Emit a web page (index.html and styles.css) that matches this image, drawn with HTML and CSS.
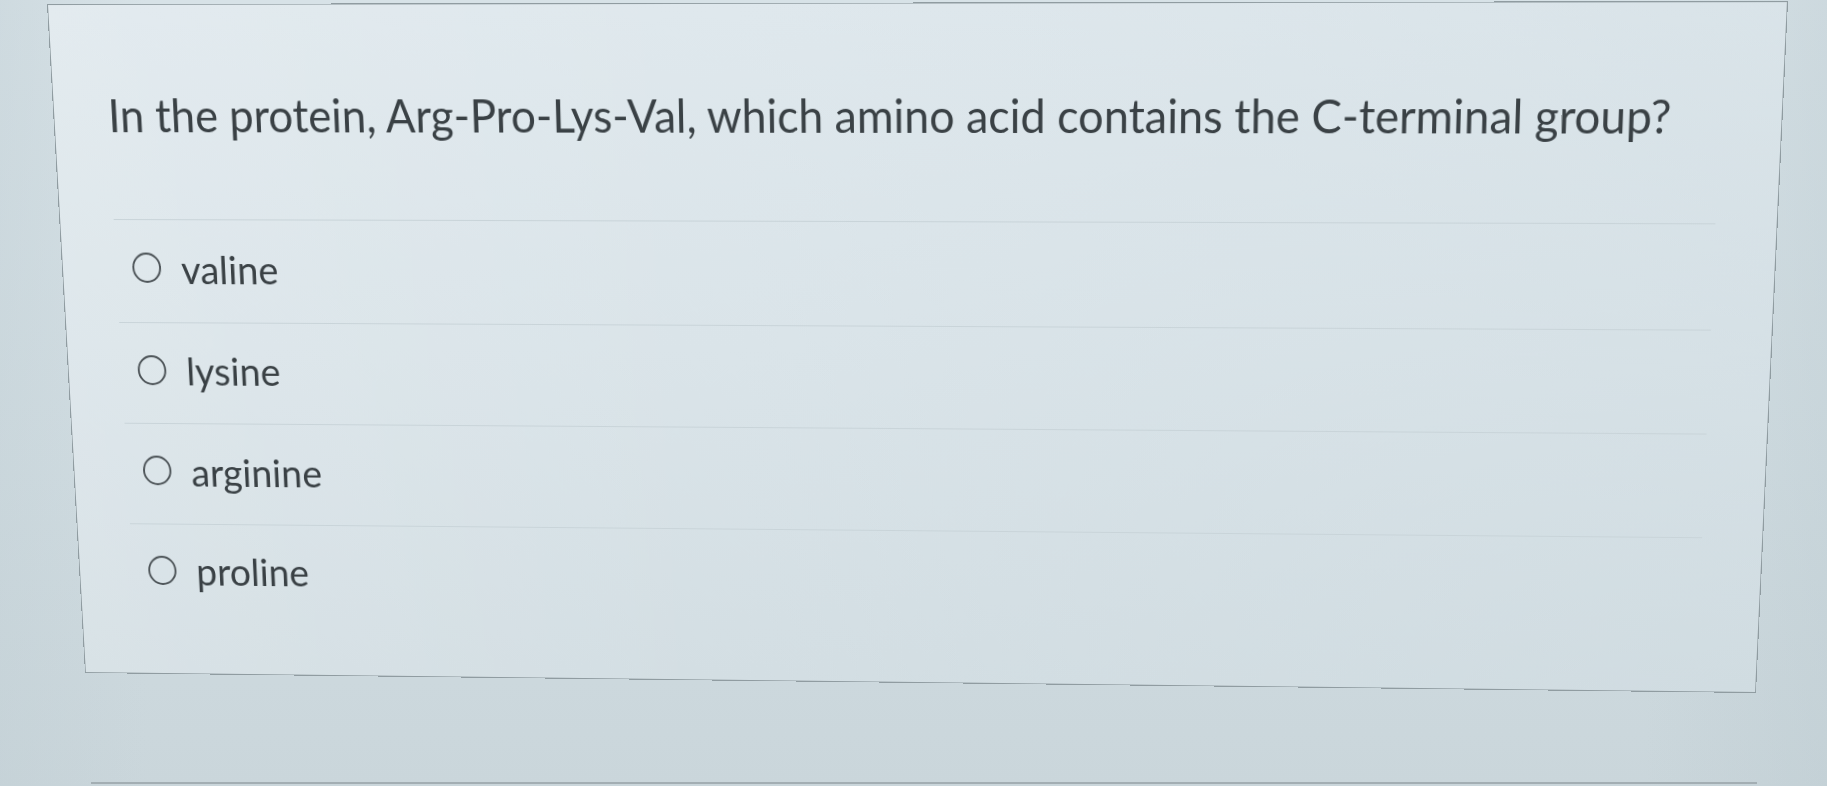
FILE: index.html
```html
<!DOCTYPE html>
<html lang="en">
<head>
<meta charset="utf-8">
<title>Question</title>
<link rel="stylesheet" href="styles.css">
</head>
<body>
<div class="page">
  <section class="card">
    <h1 class="question">In the protein, Arg-Pro-Lys-Val, which amino acid contains the C-terminal group?</h1>
    <ul class="options">
      <li class="option"><span class="radio"></span><span class="label">valine</span></li>
      <li class="option"><span class="radio"></span><span class="label">lysine</span></li>
      <li class="option"><span class="radio"></span><span class="label">arginine</span></li>
      <li class="option"><span class="radio"></span><span class="label">proline</span></li>
    </ul>
  </section>
  <div class="next-card"></div>
</div>
</body>
</html>
```
FILE: styles.css
```css
html, body {
  margin: 0;
  padding: 0;
}
body {
  background:
    linear-gradient(90deg, rgba(190, 204, 210, 0.35) 0%, rgba(255, 255, 255, 0) 8%, rgba(255, 255, 255, 0) 90%, rgba(185, 200, 206, 0.35) 100%),
    linear-gradient(180deg, #d7e2e7 0%, #d0dce1 60%, #cad6db 100%);
  font-family: Lato, "Open Sans", sans-serif;
  color: #3a4145;
  overflow: hidden;
}
.page {
  display: flex;
  flex-direction: column;
  height: 786px;
  padding-top: 4px;
  box-sizing: border-box;
}
.card {
  flex: none;
  margin: 0 39px 0 47px;
  height: 669px;
  box-sizing: border-box;
  border: 1.5px solid #909ca1;
  background:
    linear-gradient(90deg, rgba(255, 255, 255, 0.12) 0%, rgba(255, 255, 255, 0) 40%, rgba(200, 214, 220, 0.25) 100%),
    linear-gradient(180deg, #dfe8ed 0%, #dae4e9 50%, #d3dee3 100%);
  padding: 79px 60px 0 56px;
  transform-origin: 0 0;
  transform: matrix3d(0.965570, -0.0016638, 0, -0.000019776, 0.059144, 1.041232, 0, 0.000061632, 0, 0, 1, 0, 0, 0, 0, 1);
}
.question {
  margin: 0;
  font-weight: 400;
  font-size: 45px;
  line-height: 54px;
  white-space: nowrap;
}
.options {
  list-style: none;
  margin: 75px 0 0 0;
  padding: 0;
}
.option {
  display: flex;
  align-items: center;
  gap: 21px;
  height: 101.5px;
  padding: 0 0 6px 17px;
  box-sizing: border-box;
  border-top: 1px solid #c9d4d9;
  font-size: 39.5px;
}
.radio {
  width: 30px;
  height: 30px;
  border: 2.5px solid #4c5357;
  border-radius: 50%;
  box-sizing: border-box;
  flex: none;
}
.label {
  line-height: 1;
}
.next-card {
  flex: none;
  margin: 109px 70px 0 91px;
  border-top: 2px solid #a3aeb3;
  height: 20px;
}
```
